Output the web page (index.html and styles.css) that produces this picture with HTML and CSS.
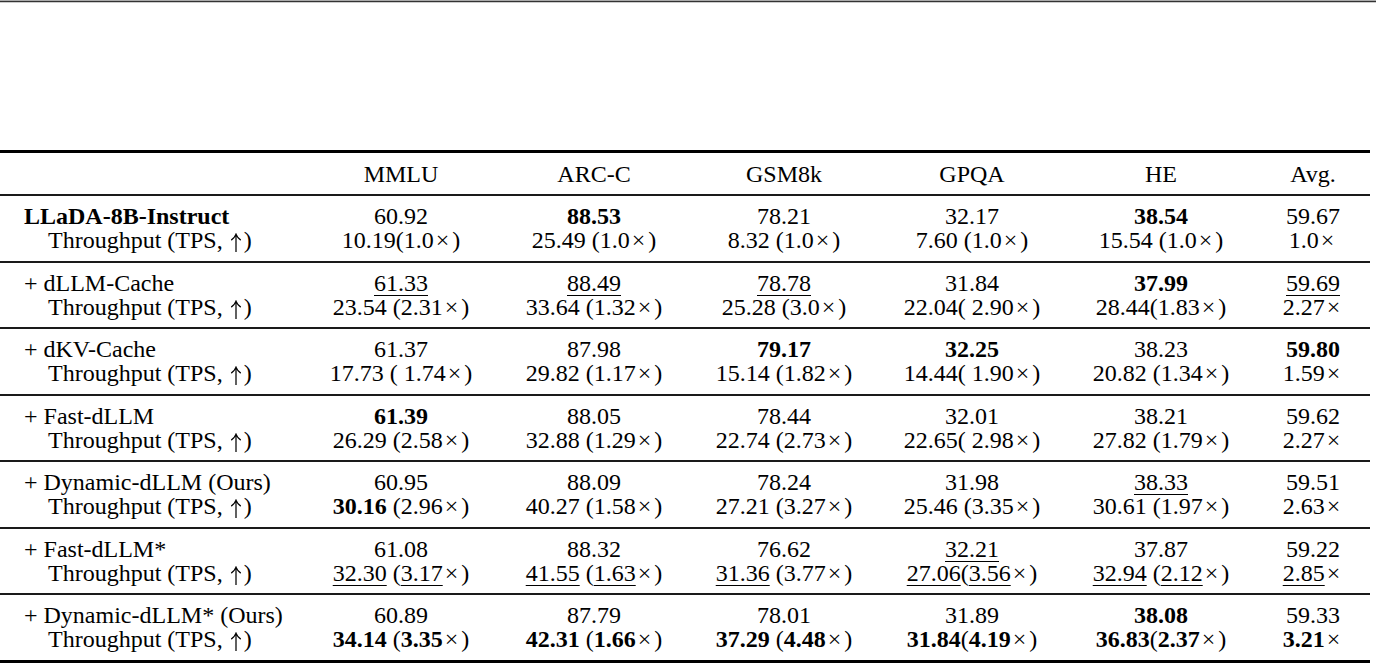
FILE: index.html
```html
<!DOCTYPE html>
<html lang="en">
<head>
<meta charset="utf-8">
<title>Results table</title>
<link rel="stylesheet" href="styles.css">
</head>
<body>
<div class="topline"></div>
<div class="table">
  <div class="row head">
    <div class="cell label"></div>
    <div class="cell">MMLU</div>
    <div class="cell">ARC-C</div>
    <div class="cell">GSM8k</div>
    <div class="cell">GPQA</div>
    <div class="cell">HE</div>
    <div class="cell">Avg.</div>
  </div>

  <div class="row group">
    <div class="cell label"><div class="ln"><b>LLaDA-8B-Instruct</b></div><div class="ln sub">Throughput (TPS, <svg class="up" viewBox="0 0 12 20" aria-label="↑"><path d="M6 1.5V20M1 7.5Q4.6 5 6 1.2Q7.4 5 11 7.5"/></svg>)</div></div>
    <div class="cell"><div class="ln">60.92</div><div class="ln">10.19(1.0<span class="x">×</span>)</div></div>
    <div class="cell"><div class="ln"><b>88.53</b></div><div class="ln">25.49 (1.0<span class="x">×</span>)</div></div>
    <div class="cell"><div class="ln">78.21</div><div class="ln">8.32 (1.0<span class="x">×</span>)</div></div>
    <div class="cell"><div class="ln">32.17</div><div class="ln">7.60 (1.0<span class="x">×</span>)</div></div>
    <div class="cell"><div class="ln"><b>38.54</b></div><div class="ln">15.54 (1.0<span class="x">×</span>)</div></div>
    <div class="cell"><div class="ln">59.67</div><div class="ln">1.0<span class="x">×</span></div></div>
  </div>

  <div class="row group">
    <div class="cell label"><div class="ln">+ dLLM-Cache</div><div class="ln sub">Throughput (TPS, <svg class="up" viewBox="0 0 12 20" aria-label="↑"><path d="M6 1.5V20M1 7.5Q4.6 5 6 1.2Q7.4 5 11 7.5"/></svg>)</div></div>
    <div class="cell"><div class="ln"><u>61.33</u></div><div class="ln">23.54 (2.31<span class="x">×</span>)</div></div>
    <div class="cell"><div class="ln"><u>88.49</u></div><div class="ln">33.64 (1.32<span class="x">×</span>)</div></div>
    <div class="cell"><div class="ln"><u>78.78</u></div><div class="ln">25.28 (3.0<span class="x">×</span>)</div></div>
    <div class="cell"><div class="ln">31.84</div><div class="ln">22.04( 2.90<span class="x">×</span>)</div></div>
    <div class="cell"><div class="ln"><b>37.99</b></div><div class="ln">28.44(1.83<span class="x">×</span>)</div></div>
    <div class="cell"><div class="ln"><u>59.69</u></div><div class="ln">2.27<span class="x">×</span></div></div>
  </div>

  <div class="row group">
    <div class="cell label"><div class="ln">+ dKV-Cache</div><div class="ln sub">Throughput (TPS, <svg class="up" viewBox="0 0 12 20" aria-label="↑"><path d="M6 1.5V20M1 7.5Q4.6 5 6 1.2Q7.4 5 11 7.5"/></svg>)</div></div>
    <div class="cell"><div class="ln">61.37</div><div class="ln">17.73 ( 1.74<span class="x">×</span>)</div></div>
    <div class="cell"><div class="ln">87.98</div><div class="ln">29.82 (1.17<span class="x">×</span>)</div></div>
    <div class="cell"><div class="ln"><b>79.17</b></div><div class="ln">15.14 (1.82<span class="x">×</span>)</div></div>
    <div class="cell"><div class="ln"><b>32.25</b></div><div class="ln">14.44( 1.90<span class="x">×</span>)</div></div>
    <div class="cell"><div class="ln">38.23</div><div class="ln">20.82 (1.34<span class="x">×</span>)</div></div>
    <div class="cell"><div class="ln"><b>59.80</b></div><div class="ln">1.59<span class="x">×</span></div></div>
  </div>

  <div class="row group">
    <div class="cell label"><div class="ln">+ Fast-dLLM</div><div class="ln sub">Throughput (TPS, <svg class="up" viewBox="0 0 12 20" aria-label="↑"><path d="M6 1.5V20M1 7.5Q4.6 5 6 1.2Q7.4 5 11 7.5"/></svg>)</div></div>
    <div class="cell"><div class="ln"><b>61.39</b></div><div class="ln">26.29 (2.58<span class="x">×</span>)</div></div>
    <div class="cell"><div class="ln">88.05</div><div class="ln">32.88 (1.29<span class="x">×</span>)</div></div>
    <div class="cell"><div class="ln">78.44</div><div class="ln">22.74 (2.73<span class="x">×</span>)</div></div>
    <div class="cell"><div class="ln">32.01</div><div class="ln">22.65( 2.98<span class="x">×</span>)</div></div>
    <div class="cell"><div class="ln">38.21</div><div class="ln">27.82 (1.79<span class="x">×</span>)</div></div>
    <div class="cell"><div class="ln">59.62</div><div class="ln">2.27<span class="x">×</span></div></div>
  </div>

  <div class="row group">
    <div class="cell label"><div class="ln">+ Dynamic-dLLM (Ours)</div><div class="ln sub">Throughput (TPS, <svg class="up" viewBox="0 0 12 20" aria-label="↑"><path d="M6 1.5V20M1 7.5Q4.6 5 6 1.2Q7.4 5 11 7.5"/></svg>)</div></div>
    <div class="cell"><div class="ln">60.95</div><div class="ln"><b>30.16</b> (2.96<span class="x">×</span>)</div></div>
    <div class="cell"><div class="ln">88.09</div><div class="ln">40.27 (1.58<span class="x">×</span>)</div></div>
    <div class="cell"><div class="ln">78.24</div><div class="ln">27.21 (3.27<span class="x">×</span>)</div></div>
    <div class="cell"><div class="ln">31.98</div><div class="ln">25.46 (3.35<span class="x">×</span>)</div></div>
    <div class="cell"><div class="ln"><u>38.33</u></div><div class="ln">30.61 (1.97<span class="x">×</span>)</div></div>
    <div class="cell"><div class="ln">59.51</div><div class="ln">2.63<span class="x">×</span></div></div>
  </div>

  <div class="row group">
    <div class="cell label"><div class="ln">+ Fast-dLLM*</div><div class="ln sub">Throughput (TPS, <svg class="up" viewBox="0 0 12 20" aria-label="↑"><path d="M6 1.5V20M1 7.5Q4.6 5 6 1.2Q7.4 5 11 7.5"/></svg>)</div></div>
    <div class="cell"><div class="ln">61.08</div><div class="ln"><u>32.30</u> (<u>3.17</u><span class="x">×</span>)</div></div>
    <div class="cell"><div class="ln">88.32</div><div class="ln"><u>41.55</u> (<u>1.63</u><span class="x">×</span>)</div></div>
    <div class="cell"><div class="ln">76.62</div><div class="ln"><u>31.36</u> (3.77<span class="x">×</span>)</div></div>
    <div class="cell"><div class="ln"><u>32.21</u></div><div class="ln"><u>27.06</u>(<u>3.56</u><span class="x">×</span>)</div></div>
    <div class="cell"><div class="ln">37.87</div><div class="ln"><u>32.94</u> (<u>2.12</u><span class="x">×</span>)</div></div>
    <div class="cell"><div class="ln">59.22</div><div class="ln"><u>2.85</u><span class="x">×</span></div></div>
  </div>

  <div class="row group last">
    <div class="cell label"><div class="ln">+ Dynamic-dLLM* (Ours)</div><div class="ln sub">Throughput (TPS, <svg class="up" viewBox="0 0 12 20" aria-label="↑"><path d="M6 1.5V20M1 7.5Q4.6 5 6 1.2Q7.4 5 11 7.5"/></svg>)</div></div>
    <div class="cell"><div class="ln">60.89</div><div class="ln"><b>34.14</b> (<b>3.35</b><span class="x">×</span>)</div></div>
    <div class="cell"><div class="ln">87.79</div><div class="ln"><b>42.31</b> (<b>1.66</b><span class="x">×</span>)</div></div>
    <div class="cell"><div class="ln">78.01</div><div class="ln"><b>37.29</b> (<b>4.48</b><span class="x">×</span>)</div></div>
    <div class="cell"><div class="ln">31.89</div><div class="ln"><b>31.84</b>(<b>4.19</b><span class="x">×</span>)</div></div>
    <div class="cell"><div class="ln"><b>38.08</b></div><div class="ln"><b>36.83</b>(<b>2.37</b><span class="x">×</span>)</div></div>
    <div class="cell"><div class="ln">59.33</div><div class="ln"><b>3.21</b><span class="x">×</span></div></div>
  </div>
</div>
</body>
</html>
```

FILE: styles.css
```css
html, body {
  margin: 0;
  padding: 0;
  background: #ffffff;
}

body {
  font-family: "Liberation Serif", "Times New Roman", serif;
  font-size: 24px;
  color: #000;
  width: 1376px;
  height: 666px;
  overflow: hidden;
}

.topline {
  height: 1px;
  background: #333;
  border-top: 1px solid #aaa;
  border-bottom: 1px solid #ccc;
}

.table {
  width: 1370px;
  margin-top: 147px;
  border-top: 3px solid #000;
  border-bottom: 3px solid #000;
}

.row {
  display: grid;
  grid-template-columns: 304px 194px 192px 188px 188px 190px 114px;
  line-height: 24px;
}

.head {
  height: 41px;
  align-items: center;
  border-bottom: 2px solid #1a1a1a;
}

.group {
  padding: 8px 0 8.5px;
  border-bottom: 2px solid #1a1a1a;
}

.group.last {
  border-bottom: none;
  padding-bottom: 9px;
}

.cell {
  text-align: center;
  white-space: nowrap;
}

.cell.label {
  text-align: left;
  padding-left: 24px;
}

.ln {
  height: 24px;
}

.ln.sub {
  padding-left: 24px;
}

b {
  font-weight: bold;
}

u {
  text-decoration: underline;
  text-decoration-thickness: 1px;
  text-underline-offset: 4px;
}

.x {
  margin: 0 3px 0 2px;
}

.up {
  width: 12px;
  height: 19px;
  margin: 0 2px 0 1px;
  vertical-align: -4px;
  fill: none;
  stroke: #000;
  stroke-width: 1.3;
}
```
